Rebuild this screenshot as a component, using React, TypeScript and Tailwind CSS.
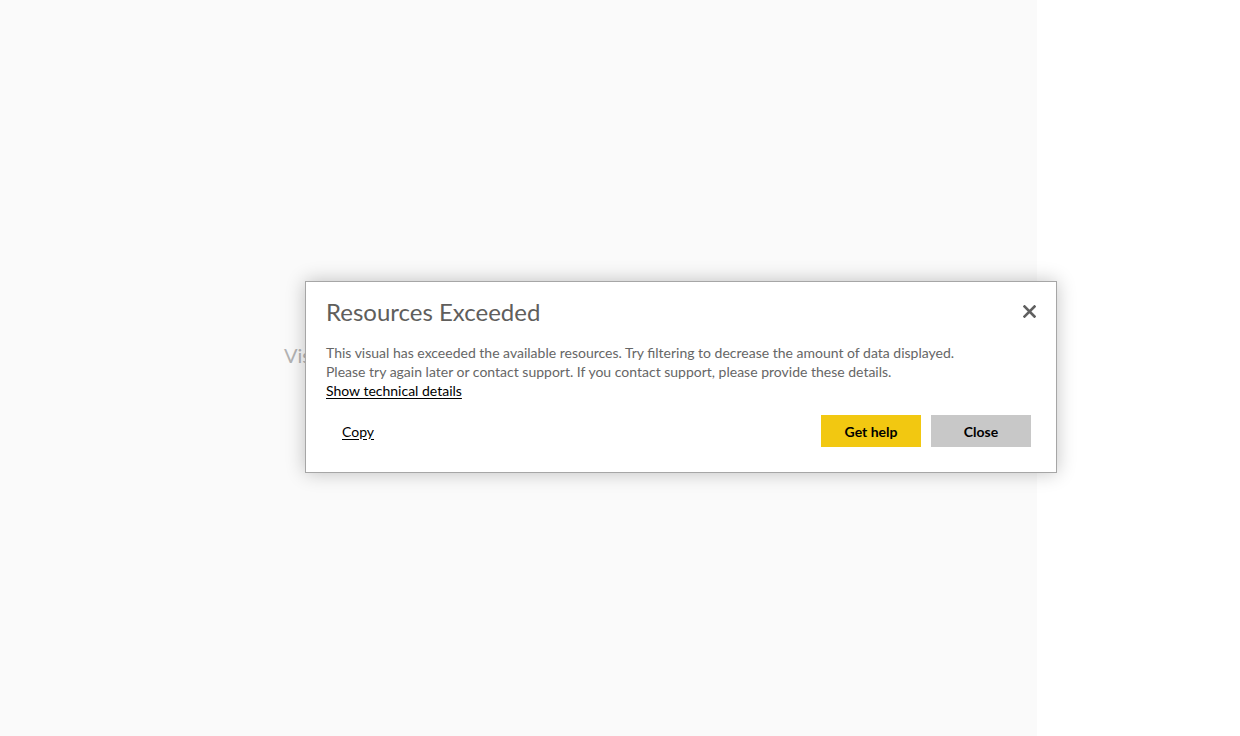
import React from "react";

export default function App() {
  return (
    <div className="flex h-[736px] w-[1240px] font-['Lato',sans-serif]">
      <div className="relative h-full w-[1037px] bg-[#fafafa]">
        <div className="pl-[284px] pt-[343px] text-[20px] leading-[24px] text-[#b3b3b3]">Vis</div>
        <div className="absolute left-[305px] top-[281px] w-[752px] border border-[#a6a6a6] bg-white pb-[25px] pl-[20px] pr-[25px] pt-[14px] shadow-[0_0_18px_rgba(0,0,0,0.24)]">
          <div className="flex items-start justify-between">
            <h1 className="text-[24px] leading-[32px] text-[#605e5c]">Resources Exceeded</h1>
            <button className="mr-[-6px] mt-[7px] flex h-[16px] w-[16px] items-center justify-center">
              <svg width="13" height="13" viewBox="0 0 13 13">
                <path d="M1.5 1.5 L11.5 11.5 M11.5 1.5 L1.5 11.5" stroke="#606060" strokeWidth="2.6" strokeLinecap="square" />
              </svg>
            </button>
          </div>
          <div className="mt-[15px] text-[14px] leading-[19px] text-[#666666]">
            <p>This visual has exceeded the available resources. Try filtering to decrease the amount of data displayed.</p>
            <p>Please try again later or contact support. If you contact support, please provide these details.</p>
            <a className="text-black underline underline-offset-[2px]">Show technical details</a>
          </div>
          <div className="mt-[15px] flex items-center">
            <a className="ml-[16px] text-[14px] leading-[19px] text-black underline underline-offset-[2px]">Copy</a>
            <div className="ml-auto flex gap-[10px]">
              <button className="h-[32px] w-[100px] bg-[#f2c811] text-[14px] font-bold text-black">Get help</button>
              <button className="h-[32px] w-[100px] bg-[#c8c8c8] text-[14px] font-bold text-black">Close</button>
            </div>
          </div>
        </div>
      </div>
      <div className="h-full flex-1 bg-white" />
    </div>
  );
}
